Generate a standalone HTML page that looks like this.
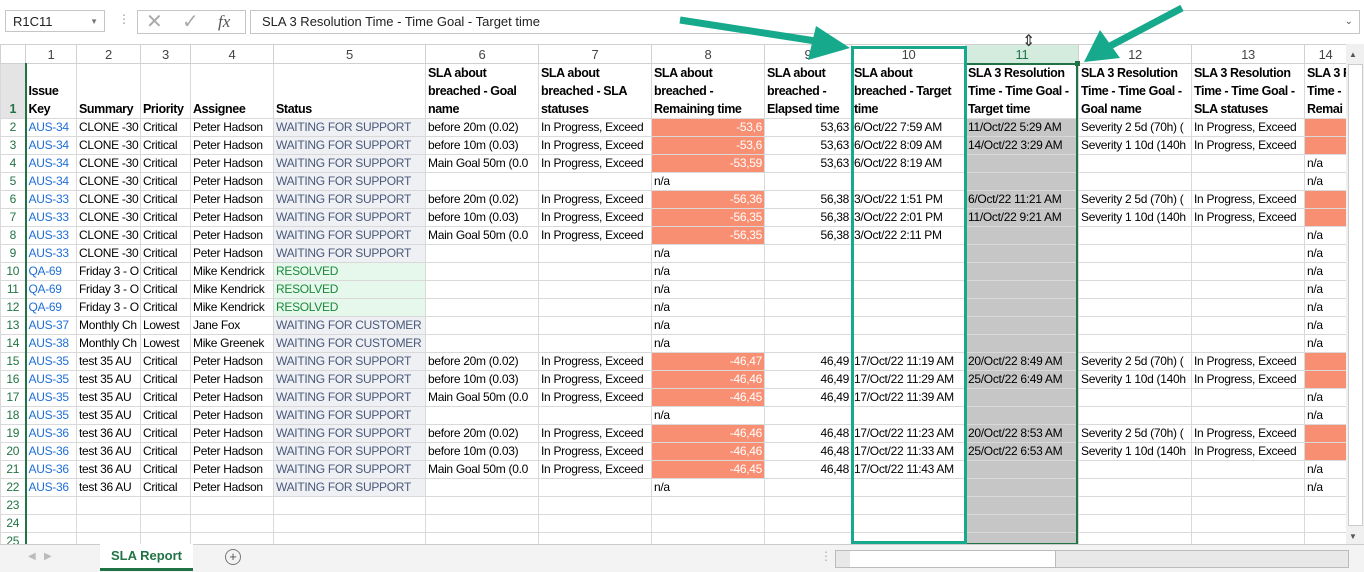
<!DOCTYPE html>
<html><head><meta charset="utf-8"><style>
body{margin:0;width:1364px;height:571px;overflow:hidden;background:#fff;font-family:"Liberation Sans",sans-serif;position:relative}
.top{position:absolute;left:0;top:0;width:1364px;height:44px;background:#fff}
.nb{position:absolute;left:5px;top:10px;width:100px;height:22px;border:1px solid #c6c6c6;font-size:13px;line-height:22px;padding-left:7px;box-sizing:border-box;color:#222}
.nb span{position:absolute;right:6px;top:0;font-size:8px;color:#777}
.fx{position:absolute;left:137px;top:10px;width:109px;height:24px;border:1px solid #c6c6c6;box-sizing:border-box;color:#aaa}
.fb{position:absolute;left:250px;top:10px;width:1110px;height:24px;border:1px solid #c6c6c6;box-sizing:border-box;font-size:13px;line-height:22px;padding-left:11px;color:#222}
table{position:absolute;left:0;top:44px;border-collapse:collapse;table-layout:fixed;width:1346px;font-size:12px;color:#000}
td{border:1px solid #d9d9d9;padding:0 2px;white-space:nowrap;overflow:hidden;height:17px;line-height:17px;letter-spacing:-0.3px}
tr.h td{height:18px;text-align:center;color:#444;font-size:13px;border-color:#d0d0d0;background:#fff}
tr.r1 td{height:54px;vertical-align:bottom;font-weight:bold;line-height:18px;padding:0}
tr.r1 td div{height:54px;overflow:hidden;display:flex;flex-direction:column;justify-content:flex-end;padding:0 2px;letter-spacing:-0.4px;font-size:12.5px;white-space:nowrap}
td.rh{text-align:center;color:#217346;background:#fff;padding:0;border-right:2px solid #217346}
tr.r1 td.rh{background:#e4e4e4}
.k{color:#1f6fd6}.w{background:#eef0f4;color:#4a5a7a}.g{background:#e6f7ec;color:#1a8a3a}
.s{background:#f88f72;color:#fff;text-align:right}.rt{text-align:right}
.c11{background:#c6c6c6}
.ch11{background:#d3ecdd!important;color:#217346!important}
.tabs{position:absolute;left:0;top:544px;width:1364px;height:27px;background:#f3f3f3;border-top:1px solid #ccc}
.tab{position:absolute;left:100px;top:-1px;width:93px;height:24px;background:#fff;border-bottom:3px solid #217346;color:#217346;font-weight:bold;font-size:13px;text-align:center;line-height:24px}
.box{position:absolute;left:851px;top:46px;width:110px;height:492px;border:3px solid #17a98c}
.vs{position:absolute;left:1346px;top:44px;width:18px;height:500px;background:#f0f0f0}
</style></head><body>
<div class="top">
<div class="nb">R1C11<span>▼</span></div>
<div style="position:absolute;left:118px;top:12px;color:#999;font-size:12px">⋮</div>
<div class="fx"><span style="position:absolute;left:8px;top:0;font-size:20px;line-height:22px">✕</span><span style="position:absolute;left:44px;top:0;font-size:20px;line-height:22px">✓</span><span style="position:absolute;left:80px;top:0;font-size:17px;font-style:italic;font-family:'Liberation Serif',serif;color:#555;line-height:22px">fx</span></div>
<div class="fb">SLA 3 Resolution Time - Time Goal - Target time<span style="position:absolute;right:6px;top:0;font-size:10px;color:#555">⌄</span></div>
</div>
<table>
<colgroup><col style="width:25px"><col style="width:51px"><col style="width:64px"><col style="width:50px"><col style="width:83px"><col style="width:152px"><col style="width:113px"><col style="width:113px"><col style="width:113px"><col style="width:87px"><col style="width:114px"><col style="width:113px"><col style="width:113px"><col style="width:113px"><col style="width:42px"></colgroup>
<tr class="h"><td style="background:#fff"></td><td>1</td><td>2</td><td>3</td><td>4</td><td>5</td><td>6</td><td>7</td><td>8</td><td>9</td><td>10</td><td class="ch11">11</td><td>12</td><td>13</td><td>14</td></tr>
<tr class="r1"><td class="rh"><div style="align-items:center">1</div></td><td><div><span>Issue</span><span>Key</span></div></td><td><div>Summary</div></td><td><div>Priority</div></td><td><div>Assignee</div></td><td><div>Status</div></td><td><div><span>SLA about</span><span>breached - Goal</span><span>name</span></div></td><td><div><span>SLA about</span><span>breached - SLA</span><span>statuses</span></div></td><td><div><span>SLA about</span><span>breached -</span><span>Remaining time</span></div></td><td><div><span>SLA about</span><span>breached -</span><span>Elapsed time</span></div></td><td><div><span>SLA about</span><span>breached - Target</span><span>time</span></div></td><td><div><span>SLA 3 Resolution</span><span>Time - Time Goal -</span><span>Target time</span></div></td><td><div><span>SLA 3 Resolution</span><span>Time - Time Goal -</span><span>Goal name</span></div></td><td><div><span>SLA 3 Resolution</span><span>Time - Time Goal -</span><span>SLA statuses</span></div></td><td><div><span>SLA 3 R</span><span>Time -</span><span>Remai</span></div></td></tr>
<tr><td class="rh">2</td><td class="k">AUS-34</td><td>CLONE -30</td><td>Critical</td><td>Peter Hadson</td><td class="w">WAITING FOR SUPPORT</td><td>before 20m (0.02)</td><td>In Progress, Exceed</td><td class="s">-53,6</td><td class="rt">53,63</td><td>6/Oct/22 7:59 AM</td><td class="c11">11/Oct/22 5:29 AM</td><td>Severity 2 5d (70h) (</td><td>In Progress, Exceed</td><td class="s"></td></tr>
<tr><td class="rh">3</td><td class="k">AUS-34</td><td>CLONE -30</td><td>Critical</td><td>Peter Hadson</td><td class="w">WAITING FOR SUPPORT</td><td>before 10m (0.03)</td><td>In Progress, Exceed</td><td class="s">-53,6</td><td class="rt">53,63</td><td>6/Oct/22 8:09 AM</td><td class="c11">14/Oct/22 3:29 AM</td><td>Severity 1 10d (140h</td><td>In Progress, Exceed</td><td class="s"></td></tr>
<tr><td class="rh">4</td><td class="k">AUS-34</td><td>CLONE -30</td><td>Critical</td><td>Peter Hadson</td><td class="w">WAITING FOR SUPPORT</td><td>Main Goal 50m (0.0</td><td>In Progress, Exceed</td><td class="s">-53,59</td><td class="rt">53,63</td><td>6/Oct/22 8:19 AM</td><td class="c11"></td><td></td><td></td><td>n/a</td></tr>
<tr><td class="rh">5</td><td class="k">AUS-34</td><td>CLONE -30</td><td>Critical</td><td>Peter Hadson</td><td class="w">WAITING FOR SUPPORT</td><td></td><td></td><td>n/a</td><td></td><td></td><td class="c11"></td><td></td><td></td><td>n/a</td></tr>
<tr><td class="rh">6</td><td class="k">AUS-33</td><td>CLONE -30</td><td>Critical</td><td>Peter Hadson</td><td class="w">WAITING FOR SUPPORT</td><td>before 20m (0.02)</td><td>In Progress, Exceed</td><td class="s">-56,36</td><td class="rt">56,38</td><td>3/Oct/22 1:51 PM</td><td class="c11">6/Oct/22 11:21 AM</td><td>Severity 2 5d (70h) (</td><td>In Progress, Exceed</td><td class="s"></td></tr>
<tr><td class="rh">7</td><td class="k">AUS-33</td><td>CLONE -30</td><td>Critical</td><td>Peter Hadson</td><td class="w">WAITING FOR SUPPORT</td><td>before 10m (0.03)</td><td>In Progress, Exceed</td><td class="s">-56,35</td><td class="rt">56,38</td><td>3/Oct/22 2:01 PM</td><td class="c11">11/Oct/22 9:21 AM</td><td>Severity 1 10d (140h</td><td>In Progress, Exceed</td><td class="s"></td></tr>
<tr><td class="rh">8</td><td class="k">AUS-33</td><td>CLONE -30</td><td>Critical</td><td>Peter Hadson</td><td class="w">WAITING FOR SUPPORT</td><td>Main Goal 50m (0.0</td><td>In Progress, Exceed</td><td class="s">-56,35</td><td class="rt">56,38</td><td>3/Oct/22 2:11 PM</td><td class="c11"></td><td></td><td></td><td>n/a</td></tr>
<tr><td class="rh">9</td><td class="k">AUS-33</td><td>CLONE -30</td><td>Critical</td><td>Peter Hadson</td><td class="w">WAITING FOR SUPPORT</td><td></td><td></td><td>n/a</td><td></td><td></td><td class="c11"></td><td></td><td></td><td>n/a</td></tr>
<tr><td class="rh">10</td><td class="k">QA-69</td><td>Friday 3 - O</td><td>Critical</td><td>Mike Kendrick</td><td class="g">RESOLVED</td><td></td><td></td><td>n/a</td><td></td><td></td><td class="c11"></td><td></td><td></td><td>n/a</td></tr>
<tr><td class="rh">11</td><td class="k">QA-69</td><td>Friday 3 - O</td><td>Critical</td><td>Mike Kendrick</td><td class="g">RESOLVED</td><td></td><td></td><td>n/a</td><td></td><td></td><td class="c11"></td><td></td><td></td><td>n/a</td></tr>
<tr><td class="rh">12</td><td class="k">QA-69</td><td>Friday 3 - O</td><td>Critical</td><td>Mike Kendrick</td><td class="g">RESOLVED</td><td></td><td></td><td>n/a</td><td></td><td></td><td class="c11"></td><td></td><td></td><td>n/a</td></tr>
<tr><td class="rh">13</td><td class="k">AUS-37</td><td>Monthly Ch</td><td>Lowest</td><td>Jane Fox</td><td class="w">WAITING FOR CUSTOMER</td><td></td><td></td><td>n/a</td><td></td><td></td><td class="c11"></td><td></td><td></td><td>n/a</td></tr>
<tr><td class="rh">14</td><td class="k">AUS-38</td><td>Monthly Ch</td><td>Lowest</td><td>Mike Greenek</td><td class="w">WAITING FOR CUSTOMER</td><td></td><td></td><td>n/a</td><td></td><td></td><td class="c11"></td><td></td><td></td><td>n/a</td></tr>
<tr><td class="rh">15</td><td class="k">AUS-35</td><td>test 35 AU</td><td>Critical</td><td>Peter Hadson</td><td class="w">WAITING FOR SUPPORT</td><td>before 20m (0.02)</td><td>In Progress, Exceed</td><td class="s">-46,47</td><td class="rt">46,49</td><td>17/Oct/22 11:19 AM</td><td class="c11">20/Oct/22 8:49 AM</td><td>Severity 2 5d (70h) (</td><td>In Progress, Exceed</td><td class="s"></td></tr>
<tr><td class="rh">16</td><td class="k">AUS-35</td><td>test 35 AU</td><td>Critical</td><td>Peter Hadson</td><td class="w">WAITING FOR SUPPORT</td><td>before 10m (0.03)</td><td>In Progress, Exceed</td><td class="s">-46,46</td><td class="rt">46,49</td><td>17/Oct/22 11:29 AM</td><td class="c11">25/Oct/22 6:49 AM</td><td>Severity 1 10d (140h</td><td>In Progress, Exceed</td><td class="s"></td></tr>
<tr><td class="rh">17</td><td class="k">AUS-35</td><td>test 35 AU</td><td>Critical</td><td>Peter Hadson</td><td class="w">WAITING FOR SUPPORT</td><td>Main Goal 50m (0.0</td><td>In Progress, Exceed</td><td class="s">-46,45</td><td class="rt">46,49</td><td>17/Oct/22 11:39 AM</td><td class="c11"></td><td></td><td></td><td>n/a</td></tr>
<tr><td class="rh">18</td><td class="k">AUS-35</td><td>test 35 AU</td><td>Critical</td><td>Peter Hadson</td><td class="w">WAITING FOR SUPPORT</td><td></td><td></td><td>n/a</td><td></td><td></td><td class="c11"></td><td></td><td></td><td>n/a</td></tr>
<tr><td class="rh">19</td><td class="k">AUS-36</td><td>test 36 AU</td><td>Critical</td><td>Peter Hadson</td><td class="w">WAITING FOR SUPPORT</td><td>before 20m (0.02)</td><td>In Progress, Exceed</td><td class="s">-46,46</td><td class="rt">46,48</td><td>17/Oct/22 11:23 AM</td><td class="c11">20/Oct/22 8:53 AM</td><td>Severity 2 5d (70h) (</td><td>In Progress, Exceed</td><td class="s"></td></tr>
<tr><td class="rh">20</td><td class="k">AUS-36</td><td>test 36 AU</td><td>Critical</td><td>Peter Hadson</td><td class="w">WAITING FOR SUPPORT</td><td>before 10m (0.03)</td><td>In Progress, Exceed</td><td class="s">-46,46</td><td class="rt">46,48</td><td>17/Oct/22 11:33 AM</td><td class="c11">25/Oct/22 6:53 AM</td><td>Severity 1 10d (140h</td><td>In Progress, Exceed</td><td class="s"></td></tr>
<tr><td class="rh">21</td><td class="k">AUS-36</td><td>test 36 AU</td><td>Critical</td><td>Peter Hadson</td><td class="w">WAITING FOR SUPPORT</td><td>Main Goal 50m (0.0</td><td>In Progress, Exceed</td><td class="s">-46,45</td><td class="rt">46,48</td><td>17/Oct/22 11:43 AM</td><td class="c11"></td><td></td><td></td><td>n/a</td></tr>
<tr><td class="rh">22</td><td class="k">AUS-36</td><td>test 36 AU</td><td>Critical</td><td>Peter Hadson</td><td class="w">WAITING FOR SUPPORT</td><td></td><td></td><td>n/a</td><td></td><td></td><td class="c11"></td><td></td><td></td><td>n/a</td></tr>
<tr><td class="rh">23</td><td></td><td></td><td></td><td></td><td></td><td></td><td></td><td></td><td></td><td></td><td class="c11"></td><td></td><td></td><td></td></tr>
<tr><td class="rh">24</td><td></td><td></td><td></td><td></td><td></td><td></td><td></td><td></td><td></td><td></td><td class="c11"></td><td></td><td></td><td></td></tr>
<tr><td class="rh">25</td><td></td><td></td><td></td><td></td><td></td><td></td><td></td><td></td><td></td><td></td><td class="c11"></td><td></td><td></td><td></td></tr>
</table>
<div style="position:absolute;left:965px;top:63px;width:113px;height:481px;border:1px solid #217346;box-sizing:border-box;border-top-width:2px;border-right-width:2px"></div>
<div style="position:absolute;left:1075px;top:61px;width:5px;height:5px;background:#217346"></div>
<div class="box"></div>
<div class="vs"><div style="position:absolute;left:3px;top:6px;font-size:8px;color:#555">▲</div><div style="position:absolute;left:2px;top:20px;width:13px;height:460px;background:#fff;border:1px solid #ccc"></div><div style="position:absolute;left:3px;top:488px;font-size:8px;color:#555">▼</div></div>
<div class="tabs">
<div style="position:absolute;left:28px;top:6px;color:#bbb;font-size:10px">◀ &nbsp; ▶</div>
<div class="tab">SLA Report</div>
<div style="position:absolute;left:225px;top:4px;width:14px;height:14px;border:1px solid #777;border-radius:50%;text-align:center;line-height:14px;font-size:13px;color:#555">+</div>
<div style="position:absolute;left:820px;top:4px;color:#aaa;font-size:12px">⋮</div>
<div style="position:absolute;left:835px;top:5px;width:512px;height:16px;background:#e8e8e8;border:1px solid #bbb"><div style="position:absolute;left:14px;top:0;width:205px;height:16px;background:#fff;border-right:1px solid #bbb"></div></div>
</div>
<svg style="position:absolute;left:0;top:0" width="1364" height="571">
<g fill="#17a98c" stroke="#17a98c">
<line x1="680" y1="20" x2="822" y2="42" stroke-width="7"/>
<polygon points="850,48 816,26 808,60" stroke="none"/>
<line x1="1182" y1="8" x2="1110" y2="46" stroke-width="7"/>
<polygon points="1084,62 1100,30 1120,58" stroke="none"/>
</g>
<text x="1022" y="46" font-size="16" fill="#333" font-family="Liberation Sans">⇕</text>
</svg>
</body></html>
